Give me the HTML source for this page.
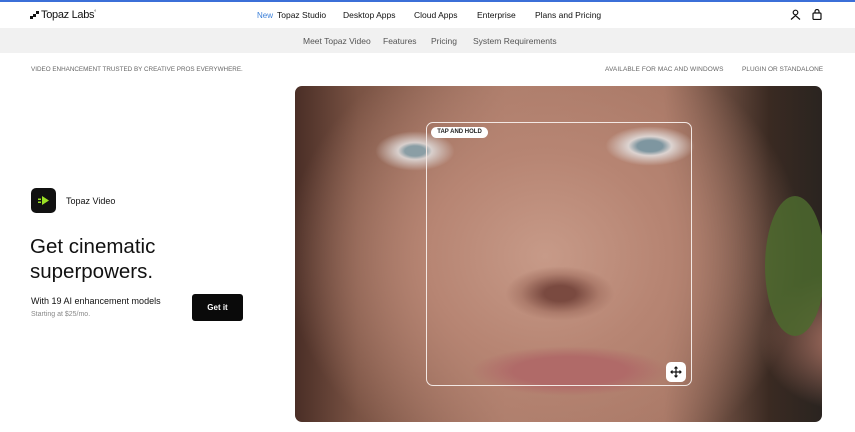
<!DOCTYPE html>
<html><head><meta charset="utf-8"><style>
*{margin:0;padding:0;box-sizing:border-box}
body{width:855px;height:432px;overflow:hidden;background:#fff;font-family:"Liberation Sans",sans-serif;color:#111;position:relative}
.a{position:absolute;white-space:nowrap}
</style></head><body>
<div class="a" style="left:0;top:0;width:855px;height:2px;background:#3b6fd8"></div>
<svg class="a" style="left:30px;top:11px" width="9" height="8"><rect x="0" y="5" width="3" height="3" fill="#111"/><rect x="3" y="3" width="3" height="3" fill="#111"/><rect x="6" y="0" width="3" height="3" fill="#111"/></svg>
<div class="a" style="left:41px;top:9px;font-size:11px;letter-spacing:-0.3px">Topaz Labs<sup style="font-size:5px">°</sup></div>
<div class="a" style="left:257px;top:11px;font-size:8px;color:#3b7fd8">New</div>
<div class="a" style="left:277px;top:10px;font-size:8.5px">Topaz Studio</div>
<div class="a" style="left:343px;top:10px;font-size:8.5px">Desktop Apps</div>
<div class="a" style="left:414px;top:10px;font-size:8.5px">Cloud Apps</div>
<div class="a" style="left:477px;top:10px;font-size:8.5px">Enterprise</div>
<div class="a" style="left:535px;top:10px;font-size:8.5px">Plans and Pricing</div>
<svg class="a" style="left:790px;top:9px" width="11" height="11" fill="none" stroke="#111" stroke-width="1.2"><circle cx="5.5" cy="3.5" r="2.3"/><path d="M1 10.5 L5.5 6.5 L10 10.5"/></svg>
<svg class="a" style="left:812px;top:9px" width="10" height="11" fill="none" stroke="#111" stroke-width="1.2"><rect x="1" y="4" width="8" height="6.5" rx="1"/><path d="M3 4 V2.5 A2 2 0 0 1 7 2.5 V4"/></svg>
<div class="a" style="left:0;top:28px;width:855px;height:25px;background:#f1f1f1"></div>
<div class="a" style="left:303px;top:36px;font-size:8.5px;color:#555">Meet Topaz Video</div>
<div class="a" style="left:383px;top:36px;font-size:8.5px;color:#555">Features</div>
<div class="a" style="left:431px;top:36px;font-size:8.5px;color:#555">Pricing</div>
<div class="a" style="left:473px;top:36px;font-size:8.5px;color:#555">System Requirements</div>
<div class="a" style="left:31px;top:66px;font-size:6.3px;color:#666">VIDEO ENHANCEMENT TRUSTED BY CREATIVE PROS EVERYWHERE.</div>
<div class="a" style="left:605px;top:66px;font-size:6.5px;color:#666;letter-spacing:0.1px">AVAILABLE FOR MAC AND WINDOWS</div>
<div class="a" style="left:742px;top:66px;font-size:6.5px;color:#666">PLUGIN OR STANDALONE</div>
<div class="a" style="left:31px;top:188px;width:25px;height:25px;border-radius:5px;background:#111"></div>
<svg class="a" style="left:36px;top:193px" width="15" height="15"><path d="M6 3 L13 7.5 L6 12Z" fill="#9be025"/><rect x="2" y="5.5" width="3" height="1.5" fill="#9be025"/><rect x="2" y="8.5" width="3" height="1.5" fill="#9be025"/></svg>
<div class="a" style="left:66px;top:196px;font-size:9px">Topaz Video</div>
<div class="a" style="left:30px;top:234px;font-size:20.5px;line-height:25px">Get cinematic<br>superpowers.</div>
<div class="a" style="left:31px;top:296px;font-size:9px">With 19 AI enhancement models</div>
<div class="a" style="left:31px;top:311px;font-size:7px;color:#888">Starting at $25/mo.</div>
<div class="a" style="left:192px;top:294px;width:51px;height:27px;background:#0a0a0a;border-radius:3px;color:#fff;font-size:8px;text-align:center;line-height:27px;font-weight:bold">Get it</div>
<div class="a" style="left:295px;top:86px;width:527px;height:336px;border-radius:7px;overflow:hidden;background:
radial-gradient(ellipse 90px 70px at 555px 255px,#b87a6a,transparent),
radial-gradient(ellipse 260px 230px at 250px 170px,#c79a88 0%,#b78573 45%,rgba(120,75,60,0) 100%),
linear-gradient(90deg,#4a2e26 0%,#7a5344 12%,#a97a68 40%,#a67664 70%,#3a2a22 90%,#2a2420 100%)">
<div class="a" style="left:80px;top:45px;width:80px;height:40px;border-radius:50%;background:radial-gradient(ellipse at 50% 50%,#8a9ea5 0 18%,#d8cfcc 30%,rgba(180,140,130,0) 70%)"></div>
<div class="a" style="left:310px;top:40px;width:90px;height:40px;border-radius:50%;background:radial-gradient(ellipse at 50% 50%,#7e96a0 0 20%,#dcd3d0 34%,rgba(180,140,130,0) 70%)"></div>
<div class="a" style="left:210px;top:180px;width:110px;height:55px;border-radius:50%;background:radial-gradient(ellipse,#7a4a40 0 20%,rgba(160,110,95,0.6) 50%,transparent 70%)"></div>
<div class="a" style="left:175px;top:260px;width:200px;height:50px;border-radius:50%;background:radial-gradient(ellipse,#b06a68 0 40%,transparent 70%)"></div>
<div class="a" style="left:470px;top:110px;width:60px;height:140px;border-radius:50%;background:#4c6a2e;opacity:.85"></div>
<div class="a" style="left:131px;top:36px;width:266px;height:264px;border:1px solid #f3e8e4;border-radius:7px"></div>
<div class="a" style="left:136px;top:41px;width:57px;height:11px;background:#fff;border-radius:6px;font-size:6px;font-weight:bold;text-align:center;line-height:11px;color:#222">TAP AND HOLD</div>
<div class="a" style="left:371px;top:276px;width:20px;height:20px;background:#fff;border-radius:5px"></div>
<svg class="a" style="left:375px;top:280px" width="12" height="12" fill="none" stroke="#111" stroke-width="1.2"><path d="M6 1V11M1 6H11M4.5 2.5L6 1L7.5 2.5M4.5 9.5L6 11L7.5 9.5M2.5 4.5L1 6L2.5 7.5M9.5 4.5L11 6L9.5 7.5"/></svg>
</div>
</body></html>
